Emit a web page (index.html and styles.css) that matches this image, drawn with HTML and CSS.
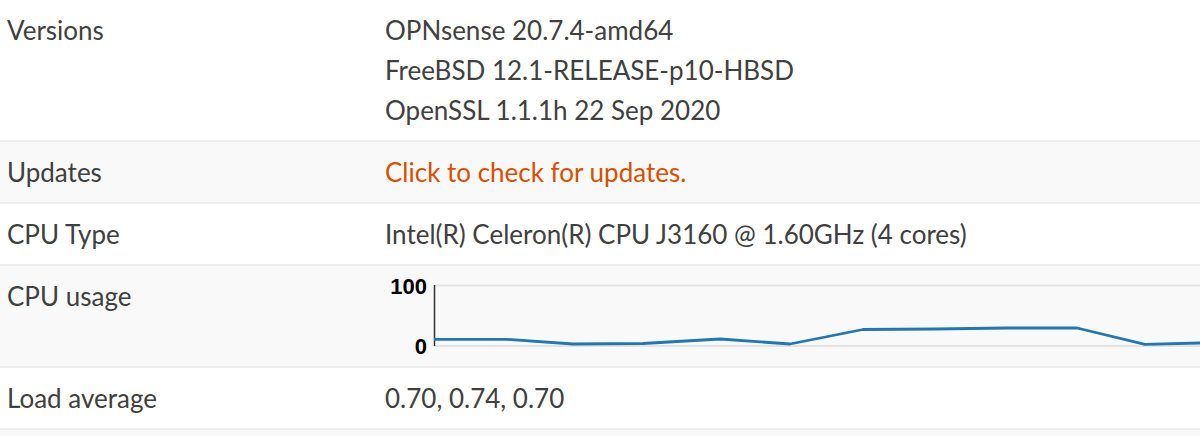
FILE: index.html
```html
<!DOCTYPE html>
<html>
<head>
<meta charset="utf-8">
<link rel="stylesheet" href="styles.css">
</head>
<body>
<div class="info-table">
  <div class="row">
    <div class="label">Versions</div>
    <div class="value">
      <div>OPNsense 20.7.4-amd64</div>
      <div>FreeBSD 12.1-RELEASE-p10-HBSD</div>
      <div>OpenSSL 1.1.1h 22 Sep 2020</div>
    </div>
  </div>
  <div class="row striped">
    <div class="label">Updates</div>
    <div class="value"><a class="update-link" href="#">Click to check for updates.</a></div>
  </div>
  <div class="row">
    <div class="label">CPU Type</div>
    <div class="value">Intel(R) Celeron(R) CPU J3160 @ 1.60GHz (4 cores)</div>
  </div>
  <div class="row striped">
    <div class="label">CPU usage</div>
    <div class="value chart-cell">
      <svg class="cpu-chart" width="815" height="80" viewBox="0 0 815 80">
        <line x1="49" y1="9.5" x2="815" y2="9.5" stroke="#e3e3e3" stroke-width="2"/>
        <line x1="49" y1="70" x2="815" y2="70" stroke="#e3e3e3" stroke-width="2"/>
        <line x1="49.5" y1="9" x2="49.5" y2="70" stroke="#333" stroke-width="1.5"/>
        <text class="axis-label" x="42" y="17.5" text-anchor="end">100</text>
        <text class="axis-label" x="42" y="77.5" text-anchor="end">0</text>
        <polyline fill="none" stroke="#1f77b4" stroke-width="2.8" stroke-linejoin="round"
          points="49,63.3 121,63.3 188,68 258,67.5 335,63 405,68 478,53.5 550,53 622,52 692,52 760,68.3 815,67"/>
      </svg>
    </div>
  </div>
  <div class="row">
    <div class="label">Load average</div>
    <div class="value">0.70, 0.74, 0.70</div>
  </div>
  <div class="row striped last"></div>
</div>
</body>
</html>
```

FILE: styles.css
```css
html, body {
  margin: 0;
  padding: 0;
  background: #ffffff;
  overflow: hidden;
}

body {
  font-family: Lato, "Open Sans", sans-serif;
  font-size: 26px;
  line-height: 40px;
  color: #404040;
}

.info-table {
  width: 1200px;
}

.row {
  display: grid;
  grid-template-columns: 375px 1fr;
  border-bottom: 2px solid #ededed;
  background: #ffffff;
}

.row.striped {
  background: #f9f9f9;
}

.label {
  padding: 10px 10px 10px 7px;
}

.value {
  padding: 10px 0 10px 10px;
  white-space: nowrap;
}

.update-link {
  color: #d94f00;
  text-decoration: none;
}

.chart-cell {
  height: 80px;
}

.cpu-chart {
  display: block;
  overflow: visible;
}

.axis-label {
  font-family: "Liberation Sans", Arial, sans-serif;
  font-weight: bold;
  font-size: 22px;
  fill: #000000;
}

.row.last {
  height: 6px;
  border-bottom: 0;
}
```
